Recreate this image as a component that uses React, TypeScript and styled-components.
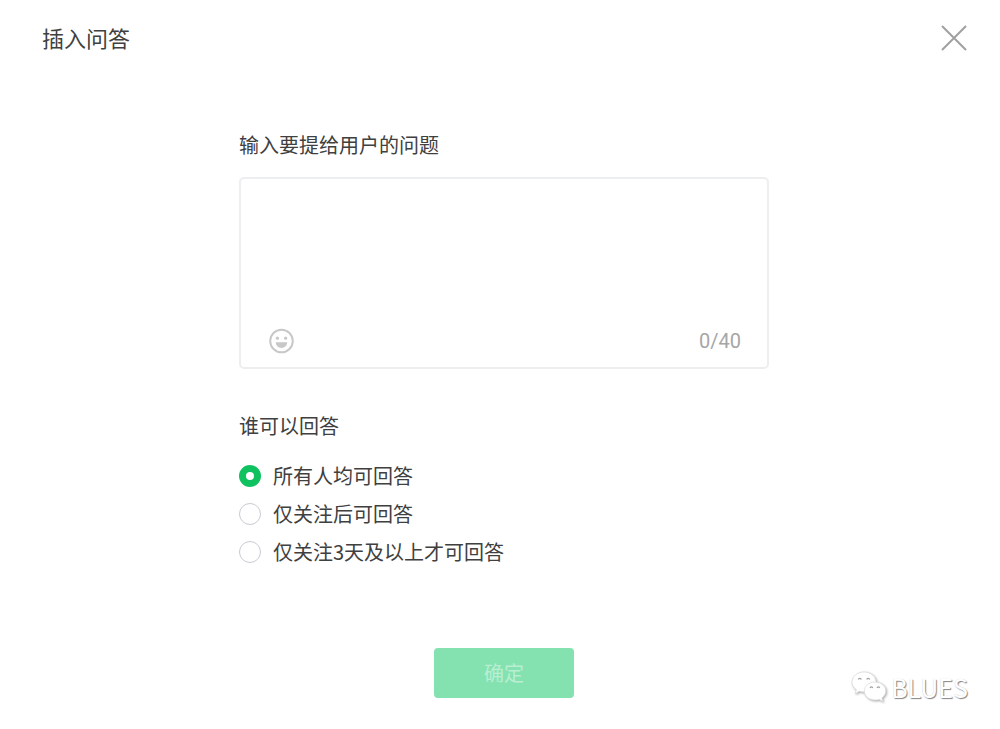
import React, { useState } from "react";
import styled, { createGlobalStyle } from "styled-components";

const GlobalStyle = createGlobalStyle`
  *, *::before, *::after { box-sizing: border-box; }
  body {
    margin: 0;
    background: #fff;
    color: #404040;
    font-family: "Noto Sans CJK SC", sans-serif;
    font-size: 20px;
    line-height: 30px;
  }
  button, textarea { font: inherit; }
`;

const Dialog = styled.section`
  position: relative;
  display: flex;
  flex-direction: column;
  min-height: 100vh;
`;

const Header = styled.header`
  display: flex;
  align-items: flex-start;
  justify-content: space-between;
  padding: 24px 32px 0 42px;
`;

const Title = styled.h1`
  margin: 0;
  font-size: 22px;
  font-weight: 400;
  line-height: 26px;
`;

const IconButton = styled.button`
  display: flex;
  padding: 0;
  border: 0;
  background: none;
  color: ${(p) => p.color};
  cursor: pointer;
`;

const Content = styled.div`
  padding-left: 8px;
`;

const Form = styled.form`
  display: flex;
  flex-direction: column;
  width: 100%;
  max-width: 530px;
  margin: 78px auto 0;
`;

const QuestionLabel = styled.label`
  margin-bottom: 17px;
`;

const QuestionBox = styled.div`
  display: flex;
  flex-direction: column;
  border: 2px solid #eceeef;
  border-radius: 5px;
`;

const Question = styled.textarea`
  display: block;
  width: 100%;
  height: 146px;
  padding: 16px 26px;
  border: 0;
  outline: 0;
  resize: none;
  background: none;
  color: inherit;
`;

const BoxFooter = styled.div`
  display: flex;
  align-items: center;
  justify-content: space-between;
  padding: 0 26px 10px;
`;

const Counter = styled.span`
  color: #a6a6a6;
  font-family: Roboto, sans-serif;
  line-height: 32px;
`;

const Audience = styled.fieldset`
  display: flex;
  flex-direction: column;
  gap: 8px;
  min-width: 0;
  margin: 42px 0 0;
  padding: 0;
  border: 0;
`;

const Legend = styled.legend`
  margin-bottom: 20px;
  padding: 0;
`;

const Option = styled.label`
  display: flex;
  align-items: center;
  gap: 12px;
`;

const Radio = styled.input`
  appearance: none;
  flex: none;
  width: 22px;
  height: 22px;
  margin: 0;
  border: 1px solid #c8cbd2;
  border-radius: 50%;
  background: #fff;

  &:checked { border: 7px solid #10c160; }
`;

const Submit = styled.button`
  align-self: center;
  width: 140px;
  height: 50px;
  margin-top: 81px;
  padding: 0;
  border: 0;
  border-radius: 4px;
  background: #84e2b0;
  color: #b8efd2;
`;

const Watermark = styled.div`
  position: absolute;
  right: 32px;
  bottom: 26px;
  display: flex;
  align-items: center;
  gap: 4px;
  color: #fff;
  font-size: 25px;
  line-height: 32px;
  text-shadow: 1px 1px 1px #858585, 0 0 1px #ccc;

  svg { filter: drop-shadow(1px 1px 1px #aaa); }
`;

const CloseIcon = () => (
  <svg width="28" height="28" viewBox="0 0 28 28" fill="none" stroke="currentColor" strokeWidth="2" aria-hidden="true">
    <path d="M2 2 26 26M26 2 2 26" />
  </svg>
);

const SmileIcon = () => (
  <svg width="28" height="26" viewBox="0 0 28 26" aria-hidden="true">
    <circle cx="14.500" cy="13" r="11.300" fill="none" stroke="currentColor" strokeWidth="2" />
    <circle cx="10.400" cy="10.200" r="1.600" fill="currentColor" />
    <circle cx="18.600" cy="10.200" r="1.600" fill="currentColor" />
    <path d="M8.800 14.300h11.400c0 3.400-2.400 5.600-5.700 5.600s-5.700-2.200-5.700-5.600Z" fill="currentColor" />
  </svg>
);

const ChatIcon = () => (
  <svg width="36" height="32" viewBox="0 0 36 32" fill="#fff" stroke="#dadada" strokeWidth="0.7" aria-hidden="true">
    <path d="M13 1C6.400 1 1 5.400 1 11c0 3.200 1.700 5.900 4.400 7.700L4.200 22.500l4.300-2.200c1.400.4 2.900.7 4.500.7 6.600 0 12-4.400 12-10S19.600 1 13 1Z" />
    <path d="M24 11c-6 0-10.700 4-10.700 9S18 29 24 29c1.400 0 2.800-.2 4-.6l4 2-1.100-3.500c2.400-1.700 3.900-4.100 3.900-6.900 0-5-4.800-9-10.800-9Z" />
    <g fill="none" stroke="#a3a3a3" strokeWidth="1.200">
      <path d="M7.200 8.500q1.600-2.400 3.200 0M15.600 8.500q1.600-2.400 3.200 0M19 17q1.400-2.200 2.800 0M26 17q1.400-2.200 2.800 0" />
    </g>
  </svg>
);

const audiences = [
  { value: "all", label: "所有人均可回答" },
  { value: "followers", label: "仅关注后可回答" },
  { value: "followers3d", label: "仅关注3天及以上才可回答" },
];

export default function App() {
  const [question, setQuestion] = useState("");
  const [audience, setAudience] = useState("all");

  return (
    <>
      <GlobalStyle />
      <Dialog role="dialog" aria-labelledby="dialog-title">
        <Header>
          <Title id="dialog-title">插入问答</Title>
          <IconButton type="button" color="#a0a0a0" aria-label="关闭">
            <CloseIcon />
          </IconButton>
        </Header>
        <Content>
          <Form onSubmit={(e) => e.preventDefault()}>
            <QuestionLabel htmlFor="question">输入要提给用户的问题</QuestionLabel>
            <QuestionBox>
              <Question
                id="question"
                maxLength={40}
                value={question}
                onChange={(e) => setQuestion(e.target.value)}
              />
              <BoxFooter>
                <IconButton type="button" color="#c8c8c8" aria-label="表情">
                  <SmileIcon />
                </IconButton>
                <Counter>{question.length}/40</Counter>
              </BoxFooter>
            </QuestionBox>
            <Audience>
              <Legend>谁可以回答</Legend>
              {audiences.map((a) => (
                <Option key={a.value}>
                  <Radio
                    type="radio"
                    name="audience"
                    value={a.value}
                    checked={audience === a.value}
                    onChange={() => setAudience(a.value)}
                  />
                  {a.label}
                </Option>
              ))}
            </Audience>
            <Submit type="submit" disabled={question.length === 0}>确定</Submit>
          </Form>
        </Content>
        <Watermark>
          <ChatIcon />
          BLUES
        </Watermark>
      </Dialog>
    </>
  );
}
